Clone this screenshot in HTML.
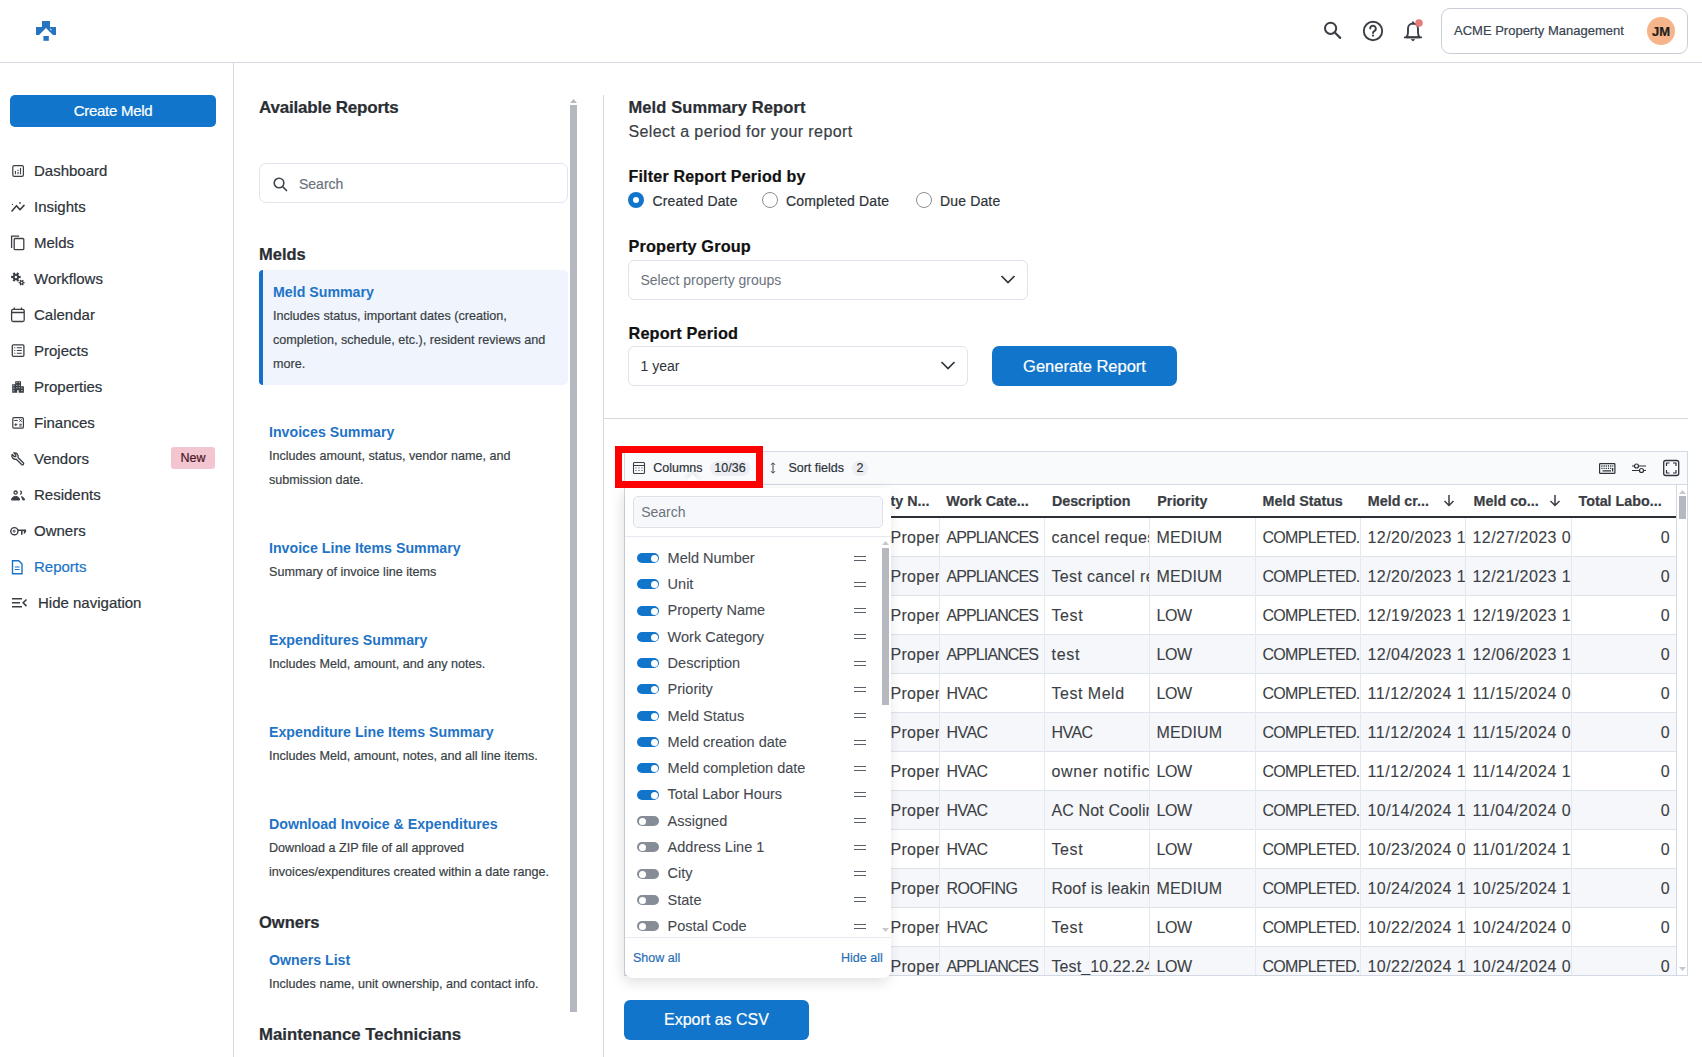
<!DOCTYPE html>
<html><head><meta charset="utf-8">
<style>
*{box-sizing:border-box;margin:0;padding:0}
html,body{width:1702px;height:1057px;overflow:hidden;background:#fff;font-family:"Liberation Sans",sans-serif;color:#2d3339}
.a{position:absolute}
.t{position:absolute;white-space:nowrap;line-height:1;-webkit-text-stroke:0.2px currentColor}
</style></head><body>
<div class="a" style="left:0px;top:62px;width:1702px;height:1px;background:#d5dae0"></div>
<svg class="a" style="left:35px;top:20px" width="22" height="22" viewBox="0 0 22 22">
 <path fill="#2673c0" d="M7 1h8v6h6v8h-3L11 8 4 15H1V7h6z"/>
 <rect fill="#2673c0" x="8.4" y="16" width="5.4" height="4.8"/>
 <path fill="#fff" d="M15 8.6l1.2.3.5 1.9-1.7-1.5z"/>
</svg>
<svg class="a" style="left:1322px;top:20px" width="22" height="20" viewBox="0 0 22 20"><circle cx="8.6" cy="8.3" r="5.6" fill="none" stroke="#3a3f45" stroke-width="2"/><path d="M12.6 12.3l5.6 5.6" stroke="#3a3f45" stroke-width="2.2" stroke-linecap="round"/></svg>
<svg class="a" style="left:1362px;top:20px" width="22" height="22" viewBox="0 0 22 22"><circle cx="11" cy="11" r="9.2" fill="none" stroke="#3a3f45" stroke-width="1.9"/><path d="M8.2 8.6a2.8 2.8 0 1 1 4 2.5c-.9.5-1.2 1-1.2 2" fill="none" stroke="#3a3f45" stroke-width="1.9" stroke-linecap="round"/><circle cx="11" cy="15.6" r="1.1" fill="#3a3f45"/></svg>
<svg class="a" style="left:1400px;top:15px" width="30" height="30" viewBox="1400 15 30 30"><path d="M1406.3 37.2c1.3-1.2 1.7-2.6 1.7-4.6v-4.1a5 5 0 0 1 10 0v4.1c0 2 .4 3.4 1.7 4.6z" fill="none" stroke="#3a3f45" stroke-width="1.9" stroke-linejoin="round"/><path d="M1404.8 37.4h16.4" stroke="#3a3f45" stroke-width="1.9" stroke-linecap="round"/><path d="M1411.4 39.6h3.2l-1.6 1.4z" fill="#3a3f45" stroke="#3a3f45" stroke-width=".8"/><path d="M1413 22.2v1.6" stroke="#3a3f45" stroke-width="1.8" stroke-linecap="round"/><circle cx="1419" cy="23" r="3.8" fill="#e57b7b"/></svg>
<div class="a" style="left:1441px;top:8px;width:247px;height:46px;border:1px solid #c9ced6;border-radius:9px"></div>
<div class="t" style="left:1454px;top:24.22px;font-size:13px;color:#3a4350;">ACME Property Management</div>
<div class="a" style="left:1647px;top:17px;width:28px;height:28px;border-radius:50%;background:#f6b48b"></div>
<div class="t" style="left:1647px;top:24.52px;font-size:13px;font-weight:700;color:#1d1d1d;width:28px;text-align:center;">JM</div>
<div class="a" style="left:233px;top:63px;width:1px;height:994px;background:#d5dae0"></div>
<div class="a" style="left:10px;top:95px;width:206px;height:32px;background:#1176cb;border-radius:5px"></div>
<div class="t" style="left:10px;top:103.12px;font-size:15px;color:#fff;width:206px;text-align:center;letter-spacing:-0.270px;">Create Meld</div>
<div class="t" style="left:34px;top:163.32px;font-size:15px;color:#2d3339;">Dashboard</div>
<div class="t" style="left:34px;top:199.32px;font-size:15px;color:#2d3339;">Insights</div>
<div class="t" style="left:34px;top:235.32px;font-size:15px;color:#2d3339;">Melds</div>
<div class="t" style="left:34px;top:271.32px;font-size:15px;color:#2d3339;">Workflows</div>
<div class="t" style="left:34px;top:307.32px;font-size:15px;color:#2d3339;">Calendar</div>
<div class="t" style="left:34px;top:343.32px;font-size:15px;color:#2d3339;">Projects</div>
<div class="t" style="left:34px;top:379.32px;font-size:15px;color:#2d3339;">Properties</div>
<div class="t" style="left:34px;top:415.32px;font-size:15px;color:#2d3339;">Finances</div>
<div class="t" style="left:34px;top:451.32px;font-size:15px;color:#2d3339;">Vendors</div>
<div class="t" style="left:34px;top:487.32px;font-size:15px;color:#2d3339;">Residents</div>
<div class="t" style="left:34px;top:523.33px;font-size:15px;color:#2d3339;">Owners</div>
<div class="t" style="left:34px;top:559.33px;font-size:15px;color:#1a73c7;">Reports</div>
<div class="t" style="left:38px;top:595.33px;font-size:15px;color:#2d3339;">Hide navigation</div>
<div class="a" style="left:171px;top:447px;width:44px;height:22px;background:#f2c5d1;border-radius:3px"></div>
<div class="t" style="left:171px;top:451.64px;font-size:12.5px;color:#4a1526;width:44px;text-align:center;">New</div>
<svg class="a" style="left:0;top:150px" width="30" height="470" viewBox="0 150 30 470" fill="none" stroke="#3a3f45" stroke-width="1.3">
 <rect x="12.8" y="165.7" width="10.6" height="10.6" rx="1.4" stroke-width="1.2"/>
 <path d="M15.4 171.3v2.5M18 172.3v1.5M18 170v.6M20.5 168.3v5.5" stroke-width="1.1" stroke-linecap="round"/>
 <path d="M12 211l4.5-5.3 3.5 4 4-4.3" stroke-width="1.6" stroke-linecap="round" stroke-linejoin="round"/>
 <circle cx="12.5" cy="204.4" r=".6" fill="#3a3f45" stroke="none"/><circle cx="20" cy="202.9" r=".95" fill="#3a3f45" stroke="none"/>
 <path d="M11.6 248V236.2h7.5" stroke-width="1.3"/><rect x="14.2" y="238.5" width="9.6" height="11.2" rx="1"/>
 <path d="M20.66 275.86 L20.66 278.14 L19.04 278.02 L18.35 279.21 L19.27 280.55 L17.29 281.70 L16.59 280.23 L15.21 280.23 L14.51 281.70 L12.53 280.55 L13.45 279.21 L12.76 278.02 L11.14 278.14 L11.14 275.86 L12.76 275.98 L13.45 274.79 L12.53 273.45 L14.51 272.30 L15.21 273.77 L16.59 273.77 L17.29 272.30 L19.27 273.45 L18.35 274.79 L19.04 275.98Z M17.10 277.00 a1.2 1.2 0 1 0 -2.4 0 a1.2 1.2 0 1 0 2.4 0Z" fill="#3a3f45" stroke="none" fill-rule="evenodd"/><path d="M24.61 281.88 L24.61 283.32 L23.60 283.25 L23.16 284.01 L23.73 284.85 L22.48 285.57 L22.04 284.65 L21.16 284.65 L20.72 285.57 L19.47 284.85 L20.04 284.01 L19.60 283.25 L18.59 283.32 L18.59 281.88 L19.60 281.95 L20.04 281.19 L19.47 280.35 L20.72 279.63 L21.16 280.55 L22.04 280.55 L22.48 279.63 L23.73 280.35 L23.16 281.19 L23.60 281.95Z M22.40 282.60 a0.8 0.8 0 1 0 -1.6 0 a0.8 0.8 0 1 0 1.6 0Z" fill="#3a3f45" stroke="none" fill-rule="evenodd"/>
 <rect x="11.6" y="309.3" width="12.6" height="12.2" rx="1.5"/><path d="M11.6 312.5h12.6M14.3 307.5v1.8M21.5 307.5v1.8"/>
 <rect x="12.3" y="344.8" width="11.6" height="11.5" rx="1"/><path d="M14.3 347.8h1M14.3 350.5h1M14.3 353.2h1M16.8 347.8h5M16.8 350.5h5M16.8 353.2h5" stroke-width="1.1"/>
 <path d="M12.2 392.8V384.2h3V381.2h5.8v5h2.9v6.6h-5.2v-2.6h-1.5v2.6z" fill="#3a3f45" stroke="none"/><path d="M13.2 385.8h1.2M13.2 388.2h1.2M13.2 390.8h1.2M16.3 382.6h1.1M18.8 382.6h1.1M16.3 385.3h1.1M18.8 385.3h1.1M16.3 387.8h1.1M18.8 387.8h1.1M21.2 388h1.3M21.2 390.6h1.3" stroke="#c8ccd1" stroke-width="1"/>
 <rect x="12.8" y="417.6" width="10.6" height="10.6" rx="1.3" stroke-width="1.2"/><path d="M14.2 420.5h3.6M19.3 419.3l2.5 2.5M21.8 419.3l-2.5 2.5M14.3 424.7h3M15.8 423.2v3M19.2 424.3h2.6M19.2 426h2.6" stroke-width="1"/>
 <path transform="translate(-1,2.3)" d="M13.2 452.2l2 2h1.6v-1.6l-2-2a3.6 3.6 0 0 1 4.2 4.6l5.3 5.3a1.2 1.2 0 0 1-1.7 1.7l-5.3-5.3a3.6 3.6 0 0 1-4.4-4.2z" stroke-width="1.3" stroke-linejoin="round"/>
 <circle cx="15.6" cy="492.6" r="1.6" stroke-width="1.3"/><path d="M20.2 490.8a1.9 1.9 0 0 1 0 3.6" stroke-width="1.3"/><path d="M11.6 500c0-2.4 1.8-3.6 4-3.6s4 1.2 4 3.6z" fill="#3a3f45" stroke-width="1"/><path d="M21.5 496.5c1.6.5 3 1.6 3.2 3.5h-2z" fill="#3a3f45" stroke-width=".8"/>
 <circle cx="14.4" cy="531.2" r="3.6" stroke-width="1.4"/><circle cx="14.2" cy="531.2" r="1" stroke-width="1"/><path d="M18 530.2h7.3v1.8M21.8 530.2v4.5M24.6 530.2v3.2" stroke-width="1.6"/>
 <path d="M12.5 560.8h6.3l3.2 3.2v9.8H12.5z" stroke="#1a73c7" stroke-width="1.4"/><path d="M14.8 567h4.8M14.8 569.5h4.8" stroke="#1a73c7" stroke-width="1.2"/>
 <path d="M12 598.8h10M12 602.8h8M12 606.8h10M26.5 599.5l-3.3 3.3 3.3 3.3" stroke-width="1.6"/>
</svg>
<div class="t" style="left:259px;top:98.94px;font-size:17px;font-weight:700;color:#2a2e33;letter-spacing:-0.2px;">Available Reports</div>
<div class="a" style="left:259px;top:163px;width:309px;height:40px;border:1px solid #e1e4ec;border-radius:7px"></div>
<svg class="a" style="left:272px;top:176px" width="18" height="18" viewBox="0 0 18 18"><circle cx="7" cy="7" r="4.8" fill="none" stroke="#3d4349" stroke-width="1.6"/><path d="M10.5 10.5l4 4" stroke="#3d4349" stroke-width="1.7" stroke-linecap="round"/></svg>
<div class="t" style="left:299px;top:177.17px;font-size:14px;color:#6b737d;">Search</div>
<div class="t" style="left:259px;top:245.96px;font-size:16.5px;font-weight:700;color:#2a2e33;">Melds</div>
<div class="a" style="left:259px;top:270px;width:309px;height:115px;background:#eff4fd;border-radius:5px"></div>
<div class="a" style="left:259px;top:270px;width:4px;height:115px;background:#1470c8;border-radius:5px 0 0 5px"></div>
<div class="t" style="left:273px;top:285.00px;font-size:14.2px;font-weight:700;color:#1f74c6;-webkit-text-stroke:0;">Meld Summary</div>
<div class="t" style="left:273px;top:309.95px;font-size:12.6px;color:#3a3f45;">Includes status, important dates (creation,</div>
<div class="t" style="left:273px;top:333.95px;font-size:12.6px;color:#3a3f45;">completion, schedule, etc.), resident reviews and</div>
<div class="t" style="left:273px;top:357.95px;font-size:12.6px;color:#3a3f45;">more.</div>
<div class="t" style="left:269px;top:425.00px;font-size:14.2px;font-weight:700;color:#1f74c6;-webkit-text-stroke:0;">Invoices Summary</div>
<div class="t" style="left:269px;top:450.15px;font-size:12.6px;color:#3a3f45;">Includes amount, status, vendor name, and</div>
<div class="t" style="left:269px;top:474.15px;font-size:12.6px;color:#3a3f45;">submission date.</div>
<div class="t" style="left:269px;top:541.00px;font-size:14.2px;font-weight:700;color:#1f74c6;-webkit-text-stroke:0;">Invoice Line Items Summary</div>
<div class="t" style="left:269px;top:566.15px;font-size:12.6px;color:#3a3f45;">Summary of invoice line items</div>
<div class="t" style="left:269px;top:633.00px;font-size:14.2px;font-weight:700;color:#1f74c6;-webkit-text-stroke:0;">Expenditures Summary</div>
<div class="t" style="left:269px;top:658.15px;font-size:12.6px;color:#3a3f45;">Includes Meld, amount, and any notes.</div>
<div class="t" style="left:269px;top:725.00px;font-size:14.2px;font-weight:700;color:#1f74c6;-webkit-text-stroke:0;">Expenditure Line Items Summary</div>
<div class="t" style="left:269px;top:750.15px;font-size:12.6px;color:#3a3f45;">Includes Meld, amount, notes, and all line items.</div>
<div class="t" style="left:269px;top:817.00px;font-size:14.2px;font-weight:700;color:#1f74c6;-webkit-text-stroke:0;">Download Invoice &amp; Expenditures</div>
<div class="t" style="left:269px;top:842.15px;font-size:12.6px;color:#3a3f45;">Download a ZIP file of all approved</div>
<div class="t" style="left:269px;top:866.15px;font-size:12.6px;color:#3a3f45;">invoices/expenditures created within a date range.</div>
<div class="t" style="left:269px;top:953.00px;font-size:14.2px;font-weight:700;color:#1f74c6;-webkit-text-stroke:0;">Owners List</div>
<div class="t" style="left:269px;top:978.15px;font-size:12.6px;color:#3a3f45;">Includes name, unit ownership, and contact info.</div>
<div class="t" style="left:259px;top:913.86px;font-size:16.5px;font-weight:700;color:#2a2e33;">Owners</div>
<div class="t" style="left:259px;top:1027.00px;font-size:16.8px;font-weight:700;color:#2a2e33;">Maintenance Technicians</div>
<div class="a" style="left:570px;top:105px;width:7px;height:907px;background:#b5b9bf"></div>
<svg class="a" style="left:569px;top:98px" width="9" height="6"><path d="M1 5l3.5-4 3.5 4z" fill="#b5b9bf"/></svg>
<div class="a" style="left:603px;top:95px;width:1px;height:962px;background:#d5dae0"></div>
<div class="t" style="left:628.5px;top:99.26px;font-size:16.5px;font-weight:700;color:#2a2e33;letter-spacing:0.1px;">Meld Summary Report</div>
<div class="t" style="left:628.5px;top:123.78px;font-size:16px;color:#3a3f45;letter-spacing:0.4px;">Select a period for your report</div>
<div class="t" style="left:628.5px;top:168.88px;font-size:16px;font-weight:700;color:#111;letter-spacing:0.2px;">Filter Report Period by</div>
<div class="a" style="left:628px;top:192px;width:16px;height:16px;border-radius:50%;background:#1176cb"></div>
<div class="a" style="left:633px;top:197px;width:6px;height:6px;border-radius:50%;background:#fff"></div>
<div class="t" style="left:652.5px;top:193.97px;font-size:14px;color:#2d3339;letter-spacing:0.15px;">Created Date</div>
<div class="a" style="left:762px;top:192px;width:16px;height:16px;border-radius:50%;border:1px solid #8a8f96"></div>
<div class="t" style="left:786px;top:193.97px;font-size:14px;color:#2d3339;letter-spacing:0.15px;">Completed Date</div>
<div class="a" style="left:916px;top:192px;width:16px;height:16px;border-radius:50%;border:1px solid #8a8f96"></div>
<div class="t" style="left:940px;top:193.97px;font-size:14px;color:#2d3339;letter-spacing:0.15px;">Due Date</div>
<div class="t" style="left:628.5px;top:237.93px;font-size:16.3px;font-weight:700;color:#111;letter-spacing:0.15px;">Property Group</div>
<div class="a" style="left:628px;top:260px;width:400px;height:40px;border:1px solid #dfe3ec;border-radius:6px"></div>
<div class="t" style="left:640.5px;top:273.17px;font-size:14px;color:#6b737d;-webkit-text-stroke:0;">Select property groups</div>
<svg class="a" style="left:1000px;top:274px" width="16" height="11"><path d="M1.5 2l6.5 6.5L14.5 2" fill="none" stroke="#2d3339" stroke-width="1.7"/></svg>
<div class="t" style="left:628.5px;top:325.13px;font-size:16.3px;font-weight:700;color:#111;letter-spacing:0.15px;">Report Period</div>
<div class="a" style="left:628px;top:346px;width:340px;height:40px;border:1px solid #dfe3ec;border-radius:6px"></div>
<div class="t" style="left:640.5px;top:358.87px;font-size:14px;color:#2d3339;-webkit-text-stroke:0;">1 year</div>
<svg class="a" style="left:940px;top:360px" width="16" height="11"><path d="M1.5 2l6.5 6.5L14.5 2" fill="none" stroke="#2d3339" stroke-width="1.7"/></svg>
<div class="a" style="left:992px;top:346px;width:185px;height:40px;background:#1176cb;border-radius:7px"></div>
<div class="t" style="left:992px;top:357.86px;font-size:16.5px;color:#fff;width:185px;text-align:center;">Generate Report</div>
<div class="a" style="left:604px;top:418px;width:1084px;height:1px;background:#d5dae0"></div>
<div class="a" style="left:624px;top:451px;width:1064px;height:525px;border:1px solid #d3d9e4;background:#fff"></div>
<div class="a" style="left:625px;top:452px;width:1062px;height:32px;background:#f9fafc"></div>
<div class="a" style="left:625px;top:484px;width:1062px;height:1px;background:#d3d9e4"></div>
<div class="a" style="left:625px;top:516px;width:1051px;height:2px;background:#2a2f36"></div>
<div class="a" style="left:625px;top:518px;width:1051px;height:39px;background:#fff"></div>
<div class="a" style="left:889px;top:518px;width:50px;height:39px;overflow:hidden"><div class="t" style="left:1.5px;top:12.18px;font-size:16px;color:#3c3f44;-webkit-text-stroke:0.1px #3c3f44;letter-spacing:0.3px">Proper</div></div>
<div class="a" style="left:940px;top:518px;width:104px;height:39px;overflow:hidden"><div class="t" style="left:6.5px;top:12.18px;font-size:16px;color:#3c3f44;-webkit-text-stroke:0.1px #3c3f44;letter-spacing:-0.890px">APPLIANCES</div></div>
<div class="a" style="left:1045px;top:518px;width:104px;height:39px;overflow:hidden"><div class="t" style="left:6.5px;top:12.18px;font-size:16px;color:#3c3f44;-webkit-text-stroke:0.1px #3c3f44;letter-spacing:0.343px">cancel request</div></div>
<div class="a" style="left:1150px;top:518px;width:105px;height:39px;overflow:hidden"><div class="t" style="left:6.5px;top:12.18px;font-size:16px;color:#3c3f44;-webkit-text-stroke:0.1px #3c3f44;letter-spacing:0.116px">MEDIUM</div></div>
<div class="a" style="left:1256px;top:518px;width:104px;height:39px;overflow:hidden"><div class="t" style="left:6.5px;top:12.18px;font-size:16px;color:#3c3f44;-webkit-text-stroke:0.1px #3c3f44;letter-spacing:-0.694px">COMPLETED.</div></div>
<div class="a" style="left:1361px;top:518px;width:104px;height:39px;overflow:hidden"><div class="t" style="left:6.5px;top:12.18px;font-size:16px;color:#3c3f44;-webkit-text-stroke:0.1px #3c3f44;letter-spacing:0.438px">12/20/2023 1</div></div>
<div class="a" style="left:1466px;top:518px;width:105px;height:39px;overflow:hidden"><div class="t" style="left:6.5px;top:12.18px;font-size:16px;color:#3c3f44;-webkit-text-stroke:0.1px #3c3f44;letter-spacing:0.438px">12/27/2023 0</div></div>
<div class="a" style="left:1572px;top:518px;width:103px;height:39px;overflow:hidden"><div class="t" style="right:5px;top:12.18px;font-size:16px;color:#3c3f44;-webkit-text-stroke:0.1px #3c3f44;letter-spacing:0.242px">0</div></div>
<div class="a" style="left:625px;top:557px;width:1051px;height:39px;background:#f5f7fb"></div>
<div class="a" style="left:625px;top:556px;width:1051px;height:1px;background:#dde2ec"></div>
<div class="a" style="left:889px;top:557px;width:50px;height:39px;overflow:hidden"><div class="t" style="left:1.5px;top:12.18px;font-size:16px;color:#3c3f44;-webkit-text-stroke:0.1px #3c3f44;letter-spacing:0.3px">Proper</div></div>
<div class="a" style="left:940px;top:557px;width:104px;height:39px;overflow:hidden"><div class="t" style="left:6.5px;top:12.18px;font-size:16px;color:#3c3f44;-webkit-text-stroke:0.1px #3c3f44;letter-spacing:-0.890px">APPLIANCES</div></div>
<div class="a" style="left:1045px;top:557px;width:104px;height:39px;overflow:hidden"><div class="t" style="left:6.5px;top:12.18px;font-size:16px;color:#3c3f44;-webkit-text-stroke:0.1px #3c3f44;letter-spacing:0.332px">Test cancel request</div></div>
<div class="a" style="left:1150px;top:557px;width:105px;height:39px;overflow:hidden"><div class="t" style="left:6.5px;top:12.18px;font-size:16px;color:#3c3f44;-webkit-text-stroke:0.1px #3c3f44;letter-spacing:0.116px">MEDIUM</div></div>
<div class="a" style="left:1256px;top:557px;width:104px;height:39px;overflow:hidden"><div class="t" style="left:6.5px;top:12.18px;font-size:16px;color:#3c3f44;-webkit-text-stroke:0.1px #3c3f44;letter-spacing:-0.694px">COMPLETED.</div></div>
<div class="a" style="left:1361px;top:557px;width:104px;height:39px;overflow:hidden"><div class="t" style="left:6.5px;top:12.18px;font-size:16px;color:#3c3f44;-webkit-text-stroke:0.1px #3c3f44;letter-spacing:0.438px">12/20/2023 1</div></div>
<div class="a" style="left:1466px;top:557px;width:105px;height:39px;overflow:hidden"><div class="t" style="left:6.5px;top:12.18px;font-size:16px;color:#3c3f44;-webkit-text-stroke:0.1px #3c3f44;letter-spacing:0.438px">12/21/2023 1</div></div>
<div class="a" style="left:1572px;top:557px;width:103px;height:39px;overflow:hidden"><div class="t" style="right:5px;top:12.18px;font-size:16px;color:#3c3f44;-webkit-text-stroke:0.1px #3c3f44;letter-spacing:0.242px">0</div></div>
<div class="a" style="left:625px;top:596px;width:1051px;height:39px;background:#fff"></div>
<div class="a" style="left:625px;top:595px;width:1051px;height:1px;background:#dde2ec"></div>
<div class="a" style="left:889px;top:596px;width:50px;height:39px;overflow:hidden"><div class="t" style="left:1.5px;top:12.18px;font-size:16px;color:#3c3f44;-webkit-text-stroke:0.1px #3c3f44;letter-spacing:0.3px">Proper</div></div>
<div class="a" style="left:940px;top:596px;width:104px;height:39px;overflow:hidden"><div class="t" style="left:6.5px;top:12.18px;font-size:16px;color:#3c3f44;-webkit-text-stroke:0.1px #3c3f44;letter-spacing:-0.890px">APPLIANCES</div></div>
<div class="a" style="left:1045px;top:596px;width:104px;height:39px;overflow:hidden"><div class="t" style="left:6.5px;top:12.18px;font-size:16px;color:#3c3f44;-webkit-text-stroke:0.1px #3c3f44;letter-spacing:0.604px">Test</div></div>
<div class="a" style="left:1150px;top:596px;width:105px;height:39px;overflow:hidden"><div class="t" style="left:6.5px;top:12.18px;font-size:16px;color:#3c3f44;-webkit-text-stroke:0.1px #3c3f44;letter-spacing:-0.363px">LOW</div></div>
<div class="a" style="left:1256px;top:596px;width:104px;height:39px;overflow:hidden"><div class="t" style="left:6.5px;top:12.18px;font-size:16px;color:#3c3f44;-webkit-text-stroke:0.1px #3c3f44;letter-spacing:-0.694px">COMPLETED.</div></div>
<div class="a" style="left:1361px;top:596px;width:104px;height:39px;overflow:hidden"><div class="t" style="left:6.5px;top:12.18px;font-size:16px;color:#3c3f44;-webkit-text-stroke:0.1px #3c3f44;letter-spacing:0.438px">12/19/2023 1</div></div>
<div class="a" style="left:1466px;top:596px;width:105px;height:39px;overflow:hidden"><div class="t" style="left:6.5px;top:12.18px;font-size:16px;color:#3c3f44;-webkit-text-stroke:0.1px #3c3f44;letter-spacing:0.438px">12/19/2023 1</div></div>
<div class="a" style="left:1572px;top:596px;width:103px;height:39px;overflow:hidden"><div class="t" style="right:5px;top:12.18px;font-size:16px;color:#3c3f44;-webkit-text-stroke:0.1px #3c3f44;letter-spacing:0.242px">0</div></div>
<div class="a" style="left:625px;top:635px;width:1051px;height:39px;background:#f5f7fb"></div>
<div class="a" style="left:625px;top:634px;width:1051px;height:1px;background:#dde2ec"></div>
<div class="a" style="left:889px;top:635px;width:50px;height:39px;overflow:hidden"><div class="t" style="left:1.5px;top:12.18px;font-size:16px;color:#3c3f44;-webkit-text-stroke:0.1px #3c3f44;letter-spacing:0.3px">Proper</div></div>
<div class="a" style="left:940px;top:635px;width:104px;height:39px;overflow:hidden"><div class="t" style="left:6.5px;top:12.18px;font-size:16px;color:#3c3f44;-webkit-text-stroke:0.1px #3c3f44;letter-spacing:-0.890px">APPLIANCES</div></div>
<div class="a" style="left:1045px;top:635px;width:104px;height:39px;overflow:hidden"><div class="t" style="left:6.5px;top:12.18px;font-size:16px;color:#3c3f44;-webkit-text-stroke:0.1px #3c3f44;letter-spacing:0.703px">test</div></div>
<div class="a" style="left:1150px;top:635px;width:105px;height:39px;overflow:hidden"><div class="t" style="left:6.5px;top:12.18px;font-size:16px;color:#3c3f44;-webkit-text-stroke:0.1px #3c3f44;letter-spacing:-0.363px">LOW</div></div>
<div class="a" style="left:1256px;top:635px;width:104px;height:39px;overflow:hidden"><div class="t" style="left:6.5px;top:12.18px;font-size:16px;color:#3c3f44;-webkit-text-stroke:0.1px #3c3f44;letter-spacing:-0.694px">COMPLETED.</div></div>
<div class="a" style="left:1361px;top:635px;width:104px;height:39px;overflow:hidden"><div class="t" style="left:6.5px;top:12.18px;font-size:16px;color:#3c3f44;-webkit-text-stroke:0.1px #3c3f44;letter-spacing:0.438px">12/04/2023 1</div></div>
<div class="a" style="left:1466px;top:635px;width:105px;height:39px;overflow:hidden"><div class="t" style="left:6.5px;top:12.18px;font-size:16px;color:#3c3f44;-webkit-text-stroke:0.1px #3c3f44;letter-spacing:0.438px">12/06/2023 1</div></div>
<div class="a" style="left:1572px;top:635px;width:103px;height:39px;overflow:hidden"><div class="t" style="right:5px;top:12.18px;font-size:16px;color:#3c3f44;-webkit-text-stroke:0.1px #3c3f44;letter-spacing:0.242px">0</div></div>
<div class="a" style="left:625px;top:674px;width:1051px;height:39px;background:#fff"></div>
<div class="a" style="left:625px;top:673px;width:1051px;height:1px;background:#dde2ec"></div>
<div class="a" style="left:889px;top:674px;width:50px;height:39px;overflow:hidden"><div class="t" style="left:1.5px;top:12.18px;font-size:16px;color:#3c3f44;-webkit-text-stroke:0.1px #3c3f44;letter-spacing:0.3px">Proper</div></div>
<div class="a" style="left:940px;top:674px;width:104px;height:39px;overflow:hidden"><div class="t" style="left:6.5px;top:12.18px;font-size:16px;color:#3c3f44;-webkit-text-stroke:0.1px #3c3f44;letter-spacing:-0.547px">HVAC</div></div>
<div class="a" style="left:1045px;top:674px;width:104px;height:39px;overflow:hidden"><div class="t" style="left:6.5px;top:12.18px;font-size:16px;color:#3c3f44;-webkit-text-stroke:0.1px #3c3f44;letter-spacing:0.515px">Test Meld</div></div>
<div class="a" style="left:1150px;top:674px;width:105px;height:39px;overflow:hidden"><div class="t" style="left:6.5px;top:12.18px;font-size:16px;color:#3c3f44;-webkit-text-stroke:0.1px #3c3f44;letter-spacing:-0.363px">LOW</div></div>
<div class="a" style="left:1256px;top:674px;width:104px;height:39px;overflow:hidden"><div class="t" style="left:6.5px;top:12.18px;font-size:16px;color:#3c3f44;-webkit-text-stroke:0.1px #3c3f44;letter-spacing:-0.694px">COMPLETED.</div></div>
<div class="a" style="left:1361px;top:674px;width:104px;height:39px;overflow:hidden"><div class="t" style="left:6.5px;top:12.18px;font-size:16px;color:#3c3f44;-webkit-text-stroke:0.1px #3c3f44;letter-spacing:0.546px">11/12/2024 1</div></div>
<div class="a" style="left:1466px;top:674px;width:105px;height:39px;overflow:hidden"><div class="t" style="left:6.5px;top:12.18px;font-size:16px;color:#3c3f44;-webkit-text-stroke:0.1px #3c3f44;letter-spacing:0.546px">11/15/2024 0</div></div>
<div class="a" style="left:1572px;top:674px;width:103px;height:39px;overflow:hidden"><div class="t" style="right:5px;top:12.18px;font-size:16px;color:#3c3f44;-webkit-text-stroke:0.1px #3c3f44;letter-spacing:0.242px">0</div></div>
<div class="a" style="left:625px;top:713px;width:1051px;height:39px;background:#f5f7fb"></div>
<div class="a" style="left:625px;top:712px;width:1051px;height:1px;background:#dde2ec"></div>
<div class="a" style="left:889px;top:713px;width:50px;height:39px;overflow:hidden"><div class="t" style="left:1.5px;top:12.18px;font-size:16px;color:#3c3f44;-webkit-text-stroke:0.1px #3c3f44;letter-spacing:0.3px">Proper</div></div>
<div class="a" style="left:940px;top:713px;width:104px;height:39px;overflow:hidden"><div class="t" style="left:6.5px;top:12.18px;font-size:16px;color:#3c3f44;-webkit-text-stroke:0.1px #3c3f44;letter-spacing:-0.547px">HVAC</div></div>
<div class="a" style="left:1045px;top:713px;width:104px;height:39px;overflow:hidden"><div class="t" style="left:6.5px;top:12.18px;font-size:16px;color:#3c3f44;-webkit-text-stroke:0.1px #3c3f44;letter-spacing:-0.547px">HVAC</div></div>
<div class="a" style="left:1150px;top:713px;width:105px;height:39px;overflow:hidden"><div class="t" style="left:6.5px;top:12.18px;font-size:16px;color:#3c3f44;-webkit-text-stroke:0.1px #3c3f44;letter-spacing:0.116px">MEDIUM</div></div>
<div class="a" style="left:1256px;top:713px;width:104px;height:39px;overflow:hidden"><div class="t" style="left:6.5px;top:12.18px;font-size:16px;color:#3c3f44;-webkit-text-stroke:0.1px #3c3f44;letter-spacing:-0.694px">COMPLETED.</div></div>
<div class="a" style="left:1361px;top:713px;width:104px;height:39px;overflow:hidden"><div class="t" style="left:6.5px;top:12.18px;font-size:16px;color:#3c3f44;-webkit-text-stroke:0.1px #3c3f44;letter-spacing:0.546px">11/12/2024 1</div></div>
<div class="a" style="left:1466px;top:713px;width:105px;height:39px;overflow:hidden"><div class="t" style="left:6.5px;top:12.18px;font-size:16px;color:#3c3f44;-webkit-text-stroke:0.1px #3c3f44;letter-spacing:0.546px">11/15/2024 0</div></div>
<div class="a" style="left:1572px;top:713px;width:103px;height:39px;overflow:hidden"><div class="t" style="right:5px;top:12.18px;font-size:16px;color:#3c3f44;-webkit-text-stroke:0.1px #3c3f44;letter-spacing:0.242px">0</div></div>
<div class="a" style="left:625px;top:752px;width:1051px;height:39px;background:#fff"></div>
<div class="a" style="left:625px;top:751px;width:1051px;height:1px;background:#dde2ec"></div>
<div class="a" style="left:889px;top:752px;width:50px;height:39px;overflow:hidden"><div class="t" style="left:1.5px;top:12.18px;font-size:16px;color:#3c3f44;-webkit-text-stroke:0.1px #3c3f44;letter-spacing:0.3px">Proper</div></div>
<div class="a" style="left:940px;top:752px;width:104px;height:39px;overflow:hidden"><div class="t" style="left:6.5px;top:12.18px;font-size:16px;color:#3c3f44;-webkit-text-stroke:0.1px #3c3f44;letter-spacing:-0.547px">HVAC</div></div>
<div class="a" style="left:1045px;top:752px;width:104px;height:39px;overflow:hidden"><div class="t" style="left:6.5px;top:12.18px;font-size:16px;color:#3c3f44;-webkit-text-stroke:0.1px #3c3f44;letter-spacing:0.672px">owner notification</div></div>
<div class="a" style="left:1150px;top:752px;width:105px;height:39px;overflow:hidden"><div class="t" style="left:6.5px;top:12.18px;font-size:16px;color:#3c3f44;-webkit-text-stroke:0.1px #3c3f44;letter-spacing:-0.363px">LOW</div></div>
<div class="a" style="left:1256px;top:752px;width:104px;height:39px;overflow:hidden"><div class="t" style="left:6.5px;top:12.18px;font-size:16px;color:#3c3f44;-webkit-text-stroke:0.1px #3c3f44;letter-spacing:-0.694px">COMPLETED.</div></div>
<div class="a" style="left:1361px;top:752px;width:104px;height:39px;overflow:hidden"><div class="t" style="left:6.5px;top:12.18px;font-size:16px;color:#3c3f44;-webkit-text-stroke:0.1px #3c3f44;letter-spacing:0.546px">11/12/2024 1</div></div>
<div class="a" style="left:1466px;top:752px;width:105px;height:39px;overflow:hidden"><div class="t" style="left:6.5px;top:12.18px;font-size:16px;color:#3c3f44;-webkit-text-stroke:0.1px #3c3f44;letter-spacing:0.546px">11/14/2024 1</div></div>
<div class="a" style="left:1572px;top:752px;width:103px;height:39px;overflow:hidden"><div class="t" style="right:5px;top:12.18px;font-size:16px;color:#3c3f44;-webkit-text-stroke:0.1px #3c3f44;letter-spacing:0.242px">0</div></div>
<div class="a" style="left:625px;top:791px;width:1051px;height:39px;background:#f5f7fb"></div>
<div class="a" style="left:625px;top:790px;width:1051px;height:1px;background:#dde2ec"></div>
<div class="a" style="left:889px;top:791px;width:50px;height:39px;overflow:hidden"><div class="t" style="left:1.5px;top:12.18px;font-size:16px;color:#3c3f44;-webkit-text-stroke:0.1px #3c3f44;letter-spacing:0.3px">Proper</div></div>
<div class="a" style="left:940px;top:791px;width:104px;height:39px;overflow:hidden"><div class="t" style="left:6.5px;top:12.18px;font-size:16px;color:#3c3f44;-webkit-text-stroke:0.1px #3c3f44;letter-spacing:-0.547px">HVAC</div></div>
<div class="a" style="left:1045px;top:791px;width:104px;height:39px;overflow:hidden"><div class="t" style="left:6.5px;top:12.18px;font-size:16px;color:#3c3f44;-webkit-text-stroke:0.1px #3c3f44;letter-spacing:0.133px">AC Not Cooling</div></div>
<div class="a" style="left:1150px;top:791px;width:105px;height:39px;overflow:hidden"><div class="t" style="left:6.5px;top:12.18px;font-size:16px;color:#3c3f44;-webkit-text-stroke:0.1px #3c3f44;letter-spacing:-0.363px">LOW</div></div>
<div class="a" style="left:1256px;top:791px;width:104px;height:39px;overflow:hidden"><div class="t" style="left:6.5px;top:12.18px;font-size:16px;color:#3c3f44;-webkit-text-stroke:0.1px #3c3f44;letter-spacing:-0.694px">COMPLETED.</div></div>
<div class="a" style="left:1361px;top:791px;width:104px;height:39px;overflow:hidden"><div class="t" style="left:6.5px;top:12.18px;font-size:16px;color:#3c3f44;-webkit-text-stroke:0.1px #3c3f44;letter-spacing:0.438px">10/14/2024 1</div></div>
<div class="a" style="left:1466px;top:791px;width:105px;height:39px;overflow:hidden"><div class="t" style="left:6.5px;top:12.18px;font-size:16px;color:#3c3f44;-webkit-text-stroke:0.1px #3c3f44;letter-spacing:0.546px">11/04/2024 0</div></div>
<div class="a" style="left:1572px;top:791px;width:103px;height:39px;overflow:hidden"><div class="t" style="right:5px;top:12.18px;font-size:16px;color:#3c3f44;-webkit-text-stroke:0.1px #3c3f44;letter-spacing:0.242px">0</div></div>
<div class="a" style="left:625px;top:830px;width:1051px;height:39px;background:#fff"></div>
<div class="a" style="left:625px;top:829px;width:1051px;height:1px;background:#dde2ec"></div>
<div class="a" style="left:889px;top:830px;width:50px;height:39px;overflow:hidden"><div class="t" style="left:1.5px;top:12.18px;font-size:16px;color:#3c3f44;-webkit-text-stroke:0.1px #3c3f44;letter-spacing:0.3px">Proper</div></div>
<div class="a" style="left:940px;top:830px;width:104px;height:39px;overflow:hidden"><div class="t" style="left:6.5px;top:12.18px;font-size:16px;color:#3c3f44;-webkit-text-stroke:0.1px #3c3f44;letter-spacing:-0.547px">HVAC</div></div>
<div class="a" style="left:1045px;top:830px;width:104px;height:39px;overflow:hidden"><div class="t" style="left:6.5px;top:12.18px;font-size:16px;color:#3c3f44;-webkit-text-stroke:0.1px #3c3f44;letter-spacing:0.604px">Test</div></div>
<div class="a" style="left:1150px;top:830px;width:105px;height:39px;overflow:hidden"><div class="t" style="left:6.5px;top:12.18px;font-size:16px;color:#3c3f44;-webkit-text-stroke:0.1px #3c3f44;letter-spacing:-0.363px">LOW</div></div>
<div class="a" style="left:1256px;top:830px;width:104px;height:39px;overflow:hidden"><div class="t" style="left:6.5px;top:12.18px;font-size:16px;color:#3c3f44;-webkit-text-stroke:0.1px #3c3f44;letter-spacing:-0.694px">COMPLETED.</div></div>
<div class="a" style="left:1361px;top:830px;width:104px;height:39px;overflow:hidden"><div class="t" style="left:6.5px;top:12.18px;font-size:16px;color:#3c3f44;-webkit-text-stroke:0.1px #3c3f44;letter-spacing:0.438px">10/23/2024 0</div></div>
<div class="a" style="left:1466px;top:830px;width:105px;height:39px;overflow:hidden"><div class="t" style="left:6.5px;top:12.18px;font-size:16px;color:#3c3f44;-webkit-text-stroke:0.1px #3c3f44;letter-spacing:0.546px">11/01/2024 1</div></div>
<div class="a" style="left:1572px;top:830px;width:103px;height:39px;overflow:hidden"><div class="t" style="right:5px;top:12.18px;font-size:16px;color:#3c3f44;-webkit-text-stroke:0.1px #3c3f44;letter-spacing:0.242px">0</div></div>
<div class="a" style="left:625px;top:869px;width:1051px;height:39px;background:#f5f7fb"></div>
<div class="a" style="left:625px;top:868px;width:1051px;height:1px;background:#dde2ec"></div>
<div class="a" style="left:889px;top:869px;width:50px;height:39px;overflow:hidden"><div class="t" style="left:1.5px;top:12.18px;font-size:16px;color:#3c3f44;-webkit-text-stroke:0.1px #3c3f44;letter-spacing:0.3px">Proper</div></div>
<div class="a" style="left:940px;top:869px;width:104px;height:39px;overflow:hidden"><div class="t" style="left:6.5px;top:12.18px;font-size:16px;color:#3c3f44;-webkit-text-stroke:0.1px #3c3f44;letter-spacing:-0.530px">ROOFING</div></div>
<div class="a" style="left:1045px;top:869px;width:104px;height:39px;overflow:hidden"><div class="t" style="left:6.5px;top:12.18px;font-size:16px;color:#3c3f44;-webkit-text-stroke:0.1px #3c3f44;letter-spacing:0.206px">Roof is leaking</div></div>
<div class="a" style="left:1150px;top:869px;width:105px;height:39px;overflow:hidden"><div class="t" style="left:6.5px;top:12.18px;font-size:16px;color:#3c3f44;-webkit-text-stroke:0.1px #3c3f44;letter-spacing:0.116px">MEDIUM</div></div>
<div class="a" style="left:1256px;top:869px;width:104px;height:39px;overflow:hidden"><div class="t" style="left:6.5px;top:12.18px;font-size:16px;color:#3c3f44;-webkit-text-stroke:0.1px #3c3f44;letter-spacing:-0.694px">COMPLETED.</div></div>
<div class="a" style="left:1361px;top:869px;width:104px;height:39px;overflow:hidden"><div class="t" style="left:6.5px;top:12.18px;font-size:16px;color:#3c3f44;-webkit-text-stroke:0.1px #3c3f44;letter-spacing:0.438px">10/24/2024 1</div></div>
<div class="a" style="left:1466px;top:869px;width:105px;height:39px;overflow:hidden"><div class="t" style="left:6.5px;top:12.18px;font-size:16px;color:#3c3f44;-webkit-text-stroke:0.1px #3c3f44;letter-spacing:0.438px">10/25/2024 1</div></div>
<div class="a" style="left:1572px;top:869px;width:103px;height:39px;overflow:hidden"><div class="t" style="right:5px;top:12.18px;font-size:16px;color:#3c3f44;-webkit-text-stroke:0.1px #3c3f44;letter-spacing:0.242px">0</div></div>
<div class="a" style="left:625px;top:908px;width:1051px;height:39px;background:#fff"></div>
<div class="a" style="left:625px;top:907px;width:1051px;height:1px;background:#dde2ec"></div>
<div class="a" style="left:889px;top:908px;width:50px;height:39px;overflow:hidden"><div class="t" style="left:1.5px;top:12.18px;font-size:16px;color:#3c3f44;-webkit-text-stroke:0.1px #3c3f44;letter-spacing:0.3px">Proper</div></div>
<div class="a" style="left:940px;top:908px;width:104px;height:39px;overflow:hidden"><div class="t" style="left:6.5px;top:12.18px;font-size:16px;color:#3c3f44;-webkit-text-stroke:0.1px #3c3f44;letter-spacing:-0.547px">HVAC</div></div>
<div class="a" style="left:1045px;top:908px;width:104px;height:39px;overflow:hidden"><div class="t" style="left:6.5px;top:12.18px;font-size:16px;color:#3c3f44;-webkit-text-stroke:0.1px #3c3f44;letter-spacing:0.604px">Test</div></div>
<div class="a" style="left:1150px;top:908px;width:105px;height:39px;overflow:hidden"><div class="t" style="left:6.5px;top:12.18px;font-size:16px;color:#3c3f44;-webkit-text-stroke:0.1px #3c3f44;letter-spacing:-0.363px">LOW</div></div>
<div class="a" style="left:1256px;top:908px;width:104px;height:39px;overflow:hidden"><div class="t" style="left:6.5px;top:12.18px;font-size:16px;color:#3c3f44;-webkit-text-stroke:0.1px #3c3f44;letter-spacing:-0.694px">COMPLETED.</div></div>
<div class="a" style="left:1361px;top:908px;width:104px;height:39px;overflow:hidden"><div class="t" style="left:6.5px;top:12.18px;font-size:16px;color:#3c3f44;-webkit-text-stroke:0.1px #3c3f44;letter-spacing:0.438px">10/22/2024 1</div></div>
<div class="a" style="left:1466px;top:908px;width:105px;height:39px;overflow:hidden"><div class="t" style="left:6.5px;top:12.18px;font-size:16px;color:#3c3f44;-webkit-text-stroke:0.1px #3c3f44;letter-spacing:0.438px">10/24/2024 0</div></div>
<div class="a" style="left:1572px;top:908px;width:103px;height:39px;overflow:hidden"><div class="t" style="right:5px;top:12.18px;font-size:16px;color:#3c3f44;-webkit-text-stroke:0.1px #3c3f44;letter-spacing:0.242px">0</div></div>
<div class="a" style="left:625px;top:947px;width:1051px;height:28px;background:#f5f7fb"></div>
<div class="a" style="left:625px;top:946px;width:1051px;height:1px;background:#dde2ec"></div>
<div class="a" style="left:889px;top:947px;width:50px;height:28px;overflow:hidden"><div class="t" style="left:1.5px;top:12.18px;font-size:16px;color:#3c3f44;-webkit-text-stroke:0.1px #3c3f44;letter-spacing:0.3px">Proper</div></div>
<div class="a" style="left:940px;top:947px;width:104px;height:28px;overflow:hidden"><div class="t" style="left:6.5px;top:12.18px;font-size:16px;color:#3c3f44;-webkit-text-stroke:0.1px #3c3f44;letter-spacing:-0.890px">APPLIANCES</div></div>
<div class="a" style="left:1045px;top:947px;width:104px;height:28px;overflow:hidden"><div class="t" style="left:6.5px;top:12.18px;font-size:16px;color:#3c3f44;-webkit-text-stroke:0.1px #3c3f44;letter-spacing:0.100px">Test_10.22.24</div></div>
<div class="a" style="left:1150px;top:947px;width:105px;height:28px;overflow:hidden"><div class="t" style="left:6.5px;top:12.18px;font-size:16px;color:#3c3f44;-webkit-text-stroke:0.1px #3c3f44;letter-spacing:-0.363px">LOW</div></div>
<div class="a" style="left:1256px;top:947px;width:104px;height:28px;overflow:hidden"><div class="t" style="left:6.5px;top:12.18px;font-size:16px;color:#3c3f44;-webkit-text-stroke:0.1px #3c3f44;letter-spacing:-0.694px">COMPLETED.</div></div>
<div class="a" style="left:1361px;top:947px;width:104px;height:28px;overflow:hidden"><div class="t" style="left:6.5px;top:12.18px;font-size:16px;color:#3c3f44;-webkit-text-stroke:0.1px #3c3f44;letter-spacing:0.438px">10/22/2024 1</div></div>
<div class="a" style="left:1466px;top:947px;width:105px;height:28px;overflow:hidden"><div class="t" style="left:6.5px;top:12.18px;font-size:16px;color:#3c3f44;-webkit-text-stroke:0.1px #3c3f44;letter-spacing:0.438px">10/24/2024 0</div></div>
<div class="a" style="left:1572px;top:947px;width:103px;height:28px;overflow:hidden"><div class="t" style="right:5px;top:12.18px;font-size:16px;color:#3c3f44;-webkit-text-stroke:0.1px #3c3f44;letter-spacing:0.242px">0</div></div>
<div class="a" style="left:939px;top:518px;width:1px;height:457px;background:#e6e9f0"></div>
<div class="a" style="left:1044px;top:518px;width:1px;height:457px;background:#e6e9f0"></div>
<div class="a" style="left:1149px;top:518px;width:1px;height:457px;background:#e6e9f0"></div>
<div class="a" style="left:1255px;top:518px;width:1px;height:457px;background:#e6e9f0"></div>
<div class="a" style="left:1360px;top:518px;width:1px;height:457px;background:#e6e9f0"></div>
<div class="a" style="left:1465px;top:518px;width:1px;height:457px;background:#e6e9f0"></div>
<div class="a" style="left:1571px;top:518px;width:1px;height:457px;background:#e6e9f0"></div>
<div class="a" style="left:1676px;top:485px;width:1px;height:490px;background:#d3d9e4"></div>
<div class="t" style="right:772.5px;top:493.72px;font-size:14.3px;font-weight:700;color:#3a3e44">perty N...</div>
<div class="t" style="left:946.3px;top:493.72px;font-size:14.3px;font-weight:700;color:#3a3e44;">Work Cate...</div>
<div class="t" style="left:1051.9px;top:493.72px;font-size:14.3px;font-weight:700;color:#3a3e44;">Description</div>
<div class="t" style="left:1157.3px;top:493.72px;font-size:14.3px;font-weight:700;color:#3a3e44;">Priority</div>
<div class="t" style="left:1262.6px;top:493.72px;font-size:14.3px;font-weight:700;color:#3a3e44;">Meld Status</div>
<div class="t" style="left:1367.8px;top:493.72px;font-size:14.3px;font-weight:700;color:#3a3e44;">Meld cr...</div>
<div class="t" style="left:1473.6px;top:493.72px;font-size:14.3px;font-weight:700;color:#3a3e44;">Meld co...</div>
<div class="t" style="left:1578.5px;top:493.72px;font-size:14.3px;font-weight:700;color:#3a3e44;">Total Labo...</div>
<svg class="a" style="left:1443px;top:494px" width="12" height="13" viewBox="0 0 12 13"><path d="M6 1v10.5M1.5 7l4.5 4.5L10.5 7" fill="none" stroke="#3a3e44" stroke-width="1.5"/></svg>
<svg class="a" style="left:1548.5px;top:494px" width="12" height="13" viewBox="0 0 12 13"><path d="M6 1v10.5M1.5 7l4.5 4.5L10.5 7" fill="none" stroke="#3a3e44" stroke-width="1.5"/></svg>
<div class="a" style="left:1679px;top:496px;width:7px;height:23px;background:#b5b9bf"></div>
<svg class="a" style="left:1678px;top:489px" width="9" height="6"><path d="M1 5l3.5-4 3.5 4z" fill="#c5c9ce"/></svg>
<svg class="a" style="left:1678px;top:966px" width="9" height="6"><path d="M1 1l3.5 4 3.5-4z" fill="#c5c9ce"/></svg>
<svg class="a" style="left:1596px;top:458px" width="90" height="20" viewBox="1596 458 90 20" fill="none" stroke="#2d3339">
 <rect x="1599.6" y="463.6" width="15.3" height="9.8" rx=".6" stroke-width="1.2"/>
 <path d="M1601.3 466h1.2M1603.5 466h1.2M1605.7 466h1.2M1607.9 466h1.2M1610.1 466h1.2M1612.3 466h1M1601.3 468.4h1.2M1603.5 468.4h1.2M1605.7 468.4h1.2M1607.9 468.4h1.2M1610.1 468.4h1.2M1602.5 470.8h8.5M1612.6 468v3.5" stroke-width="1.3"/>
 <path d="M1632 466h14M1632 470.5h14" stroke-width="1.2"/><circle cx="1636.5" cy="466" r="2" fill="#f7f8fb" stroke-width="1.2"/><circle cx="1641.5" cy="470.5" r="2" fill="#f7f8fb" stroke-width="1.2"/>
 <rect x="1663.7" y="460.5" width="15" height="15" rx="2" stroke-width="1.3"/>
 <path d="M1666.5 466v-3h3M1673 463h3v3M1676 470v3h-3M1669.5 473h-3v-3" stroke-width="1.2"/>
</svg>
<svg class="a" style="left:630px;top:458px" width="20" height="20" viewBox="630 458 20 20" fill="none" stroke="#3a3f45">
 <rect x="633.5" y="462.5" width="11" height="11" rx="1" stroke-width="1.1"/><path d="M633.5 465.5h11M635.5 468h1M638.5 468h1M641.5 468h1M635.5 470.5h1M638.5 470.5h1M641.5 470.5h1" stroke-width="1"/>
</svg>
<div class="t" style="left:653.2px;top:461.54px;font-size:12.5px;color:#2d3339;">Columns</div>
<div class="a" style="left:710px;top:460.5px;width:40px;height:15px;background:#eceef3;border-radius:8px"></div>
<div class="t" style="left:710px;top:461.54px;font-size:12.5px;color:#2d3339;width:40px;text-align:center;">10/36</div>
<svg class="a" style="left:767px;top:461px" width="12" height="14" viewBox="0 0 12 14"><path d="M6 2v10M4 3.8L6 1.8 8 3.8M4 10.2L6 12.2 8 10.2" fill="none" stroke="#3a3f45" stroke-width="1"/></svg>
<div class="t" style="left:788.4px;top:461.54px;font-size:12.5px;color:#2d3339;">Sort fields</div>
<div class="a" style="left:852px;top:460.5px;width:16px;height:15px;background:#eceef3;border-radius:8px"></div>
<div class="t" style="left:852px;top:461.54px;font-size:12.5px;color:#2d3339;width:16px;text-align:center;">2</div>
<div class="a" style="left:624.5px;top:487.5px;width:266.5px;height:490.5px;background:#fff;border-radius:0 0 8px 8px;box-shadow:-2px 4px 14px rgba(0,0,0,0.13)"></div>
<div class="a" style="left:633px;top:496px;width:250px;height:32px;background:#f7f8fb;border:1px solid #dde2ea;border-radius:5px"></div>
<div class="t" style="left:641.2px;top:505.17px;font-size:14px;color:#6b737d;-webkit-text-stroke:0;">Search</div>
<div class="a" style="left:625px;top:536px;width:266px;height:1px;background:#e6e9ef"></div>
<div class="a" style="left:637px;top:553px;width:22px;height:10px;border-radius:5px;background:#1176cb"></div>
<div class="a" style="left:650.5px;top:554.5px;width:7px;height:7px;border-radius:50%;background:#fff"></div>
<div class="t" style="left:667.6px;top:550.75px;font-size:14.5px;color:#454a50;-webkit-text-stroke:0.1px #454a50;">Meld Number</div>
<div class="a" style="left:854px;top:556px;width:12px;height:1.3px;background:#5a6069"></div>
<div class="a" style="left:854px;top:560px;width:12px;height:1.3px;background:#5a6069"></div>
<div class="a" style="left:637px;top:579px;width:22px;height:10px;border-radius:5px;background:#1176cb"></div>
<div class="a" style="left:650.5px;top:580.5px;width:7px;height:7px;border-radius:50%;background:#fff"></div>
<div class="t" style="left:667.6px;top:577.05px;font-size:14.5px;color:#454a50;-webkit-text-stroke:0.1px #454a50;">Unit</div>
<div class="a" style="left:854px;top:582px;width:12px;height:1.3px;background:#5a6069"></div>
<div class="a" style="left:854px;top:586px;width:12px;height:1.3px;background:#5a6069"></div>
<div class="a" style="left:637px;top:606px;width:22px;height:10px;border-radius:5px;background:#1176cb"></div>
<div class="a" style="left:650.5px;top:607.5px;width:7px;height:7px;border-radius:50%;background:#fff"></div>
<div class="t" style="left:667.6px;top:603.35px;font-size:14.5px;color:#454a50;-webkit-text-stroke:0.1px #454a50;">Property Name</div>
<div class="a" style="left:854px;top:608px;width:12px;height:1.3px;background:#5a6069"></div>
<div class="a" style="left:854px;top:612px;width:12px;height:1.3px;background:#5a6069"></div>
<div class="a" style="left:637px;top:632px;width:22px;height:10px;border-radius:5px;background:#1176cb"></div>
<div class="a" style="left:650.5px;top:633.5px;width:7px;height:7px;border-radius:50%;background:#fff"></div>
<div class="t" style="left:667.6px;top:629.65px;font-size:14.5px;color:#454a50;-webkit-text-stroke:0.1px #454a50;">Work Category</div>
<div class="a" style="left:854px;top:634px;width:12px;height:1.3px;background:#5a6069"></div>
<div class="a" style="left:854px;top:638px;width:12px;height:1.3px;background:#5a6069"></div>
<div class="a" style="left:637px;top:658px;width:22px;height:10px;border-radius:5px;background:#1176cb"></div>
<div class="a" style="left:650.5px;top:659.5px;width:7px;height:7px;border-radius:50%;background:#fff"></div>
<div class="t" style="left:667.6px;top:655.95px;font-size:14.5px;color:#454a50;-webkit-text-stroke:0.1px #454a50;">Description</div>
<div class="a" style="left:854px;top:661px;width:12px;height:1.3px;background:#5a6069"></div>
<div class="a" style="left:854px;top:665px;width:12px;height:1.3px;background:#5a6069"></div>
<div class="a" style="left:637px;top:684px;width:22px;height:10px;border-radius:5px;background:#1176cb"></div>
<div class="a" style="left:650.5px;top:685.5px;width:7px;height:7px;border-radius:50%;background:#fff"></div>
<div class="t" style="left:667.6px;top:682.25px;font-size:14.5px;color:#454a50;-webkit-text-stroke:0.1px #454a50;">Priority</div>
<div class="a" style="left:854px;top:687px;width:12px;height:1.3px;background:#5a6069"></div>
<div class="a" style="left:854px;top:691px;width:12px;height:1.3px;background:#5a6069"></div>
<div class="a" style="left:637px;top:711px;width:22px;height:10px;border-radius:5px;background:#1176cb"></div>
<div class="a" style="left:650.5px;top:712.5px;width:7px;height:7px;border-radius:50%;background:#fff"></div>
<div class="t" style="left:667.6px;top:708.55px;font-size:14.5px;color:#454a50;-webkit-text-stroke:0.1px #454a50;">Meld Status</div>
<div class="a" style="left:854px;top:713px;width:12px;height:1.3px;background:#5a6069"></div>
<div class="a" style="left:854px;top:717px;width:12px;height:1.3px;background:#5a6069"></div>
<div class="a" style="left:637px;top:737px;width:22px;height:10px;border-radius:5px;background:#1176cb"></div>
<div class="a" style="left:650.5px;top:738.5px;width:7px;height:7px;border-radius:50%;background:#fff"></div>
<div class="t" style="left:667.6px;top:734.85px;font-size:14.5px;color:#454a50;-webkit-text-stroke:0.1px #454a50;">Meld creation date</div>
<div class="a" style="left:854px;top:740px;width:12px;height:1.3px;background:#5a6069"></div>
<div class="a" style="left:854px;top:744px;width:12px;height:1.3px;background:#5a6069"></div>
<div class="a" style="left:637px;top:763px;width:22px;height:10px;border-radius:5px;background:#1176cb"></div>
<div class="a" style="left:650.5px;top:764.5px;width:7px;height:7px;border-radius:50%;background:#fff"></div>
<div class="t" style="left:667.6px;top:761.15px;font-size:14.5px;color:#454a50;-webkit-text-stroke:0.1px #454a50;">Meld completion date</div>
<div class="a" style="left:854px;top:766px;width:12px;height:1.3px;background:#5a6069"></div>
<div class="a" style="left:854px;top:770px;width:12px;height:1.3px;background:#5a6069"></div>
<div class="a" style="left:637px;top:790px;width:22px;height:10px;border-radius:5px;background:#1176cb"></div>
<div class="a" style="left:650.5px;top:791.5px;width:7px;height:7px;border-radius:50%;background:#fff"></div>
<div class="t" style="left:667.6px;top:787.45px;font-size:14.5px;color:#454a50;-webkit-text-stroke:0.1px #454a50;">Total Labor Hours</div>
<div class="a" style="left:854px;top:792px;width:12px;height:1.3px;background:#5a6069"></div>
<div class="a" style="left:854px;top:796px;width:12px;height:1.3px;background:#5a6069"></div>
<div class="a" style="left:637px;top:816px;width:22px;height:10px;border-radius:5px;background:#878d96"></div>
<div class="a" style="left:639px;top:817.5px;width:7px;height:7px;border-radius:50%;background:#fff"></div>
<div class="t" style="left:667.6px;top:813.75px;font-size:14.5px;color:#454a50;-webkit-text-stroke:0.1px #454a50;">Assigned</div>
<div class="a" style="left:854px;top:818px;width:12px;height:1.3px;background:#5a6069"></div>
<div class="a" style="left:854px;top:822px;width:12px;height:1.3px;background:#5a6069"></div>
<div class="a" style="left:637px;top:842px;width:22px;height:10px;border-radius:5px;background:#878d96"></div>
<div class="a" style="left:639px;top:843.5px;width:7px;height:7px;border-radius:50%;background:#fff"></div>
<div class="t" style="left:667.6px;top:840.05px;font-size:14.5px;color:#454a50;-webkit-text-stroke:0.1px #454a50;">Address Line 1</div>
<div class="a" style="left:854px;top:845px;width:12px;height:1.3px;background:#5a6069"></div>
<div class="a" style="left:854px;top:849px;width:12px;height:1.3px;background:#5a6069"></div>
<div class="a" style="left:637px;top:869px;width:22px;height:10px;border-radius:5px;background:#878d96"></div>
<div class="a" style="left:639px;top:870.5px;width:7px;height:7px;border-radius:50%;background:#fff"></div>
<div class="t" style="left:667.6px;top:866.35px;font-size:14.5px;color:#454a50;-webkit-text-stroke:0.1px #454a50;">City</div>
<div class="a" style="left:854px;top:871px;width:12px;height:1.3px;background:#5a6069"></div>
<div class="a" style="left:854px;top:875px;width:12px;height:1.3px;background:#5a6069"></div>
<div class="a" style="left:637px;top:895px;width:22px;height:10px;border-radius:5px;background:#878d96"></div>
<div class="a" style="left:639px;top:896.5px;width:7px;height:7px;border-radius:50%;background:#fff"></div>
<div class="t" style="left:667.6px;top:892.65px;font-size:14.5px;color:#454a50;-webkit-text-stroke:0.1px #454a50;">State</div>
<div class="a" style="left:854px;top:897px;width:12px;height:1.3px;background:#5a6069"></div>
<div class="a" style="left:854px;top:901px;width:12px;height:1.3px;background:#5a6069"></div>
<div class="a" style="left:637px;top:921px;width:22px;height:10px;border-radius:5px;background:#878d96"></div>
<div class="a" style="left:639px;top:922.5px;width:7px;height:7px;border-radius:50%;background:#fff"></div>
<div class="t" style="left:667.6px;top:918.95px;font-size:14.5px;color:#454a50;-webkit-text-stroke:0.1px #454a50;">Postal Code</div>
<div class="a" style="left:854px;top:924px;width:12px;height:1.3px;background:#5a6069"></div>
<div class="a" style="left:854px;top:928px;width:12px;height:1.3px;background:#5a6069"></div>
<div class="a" style="left:882px;top:548px;width:7px;height:157px;background:#b5b9bf"></div>
<svg class="a" style="left:881px;top:540px" width="9" height="6"><path d="M1 5l3.5-4 3.5 4z" fill="#c5c9ce"/></svg>
<svg class="a" style="left:881px;top:927px" width="9" height="6"><path d="M1 1l3.5 4 3.5-4z" fill="#c5c9ce"/></svg>
<div class="a" style="left:625px;top:937px;width:266px;height:1px;background:#e6e9ef"></div>
<div class="t" style="left:633px;top:951.94px;font-size:12.5px;color:#2a6fb5;">Show all</div>
<div class="t" style="left:841px;top:951.94px;font-size:12.5px;color:#2a6fb5;">Hide all</div>
<div class="a" style="left:687.5px;top:475.5px;width:9px;height:9px;background:#fff;transform:rotate(45deg);box-shadow:-2px -2px 6px rgba(0,0,0,0.10)"></div>
<div class="a" style="left:680px;top:481px;width:24px;height:7px;background:#fff"></div>
<div class="a" style="left:615px;top:446px;width:148px;height:42px;border:7px solid #ff0000"></div>
<div class="a" style="left:624px;top:1000px;width:185px;height:40px;background:#1176cb;border-radius:6px"></div>
<div class="t" style="left:624px;top:1012.48px;font-size:16px;color:#fff;width:185px;text-align:center;">Export as CSV</div>
</body></html>
